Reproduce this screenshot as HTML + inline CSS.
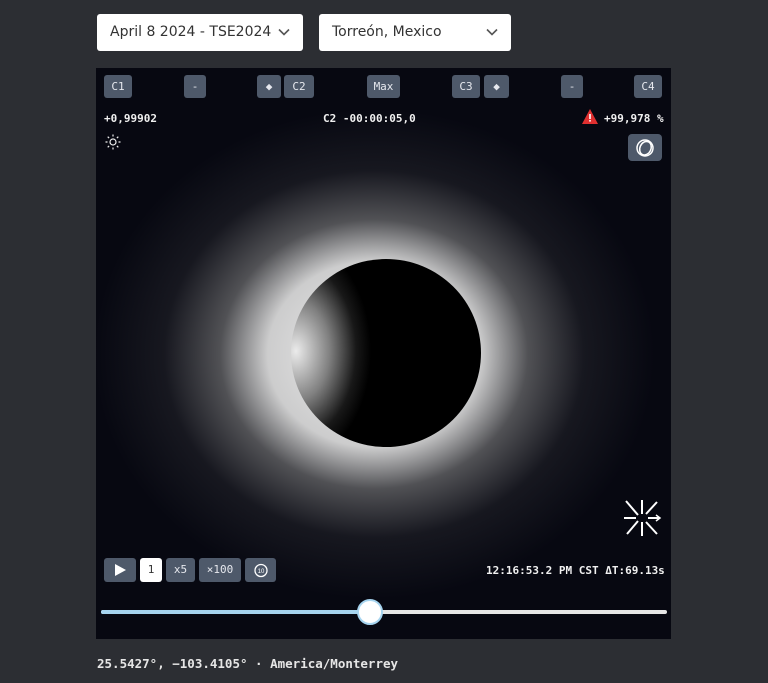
<!DOCTYPE html>
<html><head><meta charset="utf-8"><style>
*{margin:0;padding:0;box-sizing:border-box}
html,body{width:768px;height:683px;overflow:hidden}
body{background:#2c2e33;font-family:"Liberation Sans",sans-serif;position:relative}
.sel{position:absolute;top:14px;height:37px;background:#fff;border-radius:3px;font-family:"DejaVu Sans",sans-serif;font-size:14px;color:#333;line-height:37px;padding-left:13px}
.sel svg{position:absolute;right:13px;top:14px}
#panel{position:absolute;left:96px;top:68px;width:575px;height:571px;background:#070811;overflow:hidden}
.b{position:absolute;height:23px;background:#4e596a;border-radius:3px;color:#e6e8ee;font-family:"DejaVu Sans Mono","Liberation Mono",monospace;font-size:11px;line-height:23px;text-align:center}
.t{position:absolute;color:#f0f0f0;font-family:"DejaVu Sans Mono","Liberation Mono",monospace;font-size:11px;font-weight:bold}
</style></head><body>
<div class="sel" style="left:97px;width:206px">April 8 2024 - TSE2024<svg width="12" height="8" viewBox="0 0 12 8"><path d="M1 1.5L6 6.5L11 1.5" stroke="#555" stroke-width="1.6" fill="none"/></svg></div>
<div class="sel" style="left:319px;width:192px">Torreón, Mexico<svg width="12" height="8" viewBox="0 0 12 8"><path d="M1 1.5L6 6.5L11 1.5" stroke="#555" stroke-width="1.6" fill="none"/></svg></div>
<div id="panel">
<div style="position:absolute;left:-110px;top:-100px;width:800px;height:770px;background:radial-gradient(ellipse 280px 245px at 388px 386px,rgba(240,240,240,1) 0%,rgba(215,215,215,.95) 38%,rgba(130,130,130,.6) 55%,rgba(60,60,65,.3) 75%,rgba(7,8,17,0) 100%)"></div>
<div style="position:absolute;left:195px;top:191px;width:190px;height:188px;border-radius:50%;background:radial-gradient(ellipse 75px 110px at 5px 92px,rgba(235,235,235,1) 0%,rgba(160,160,160,.8) 45%,rgba(40,40,40,.6) 80%,#000 100%),#000;background-color:#000"></div>
<div class="b" style="left:8px;top:7px;width:28px">C1</div>
<div class="b" style="left:88px;top:7px;width:22px">-</div>
<div class="b" style="left:161px;top:7px;width:24px">◆</div>
<div class="b" style="left:188px;top:7px;width:30px">C2</div>
<div class="b" style="left:271px;top:7px;width:33px">Max</div>
<div class="b" style="left:356px;top:7px;width:28px">C3</div>
<div class="b" style="left:388px;top:7px;width:25px">◆</div>
<div class="b" style="left:465px;top:7px;width:22px">-</div>
<div class="b" style="left:538px;top:7px;width:28px">C4</div>
<div class="t" style="left:8px;top:44px">+0,99902</div>
<div class="t" style="left:227px;top:44px">C2 -00:00:05,0</div>
<svg style="position:absolute;left:486px;top:41px" width="16" height="15" viewBox="0 0 16 15"><path d="M8 0L16 15H0Z" fill="#e03030"/><rect x="7.2" y="5" width="1.6" height="5" fill="#fff"/><rect x="7.2" y="11" width="1.6" height="1.6" fill="#fff"/></svg>
<div class="t" style="left:508px;top:44px">+99,978 %</div>
<svg style="position:absolute;left:9px;top:66px" width="16" height="16" viewBox="0 0 16 16" stroke="#eee" stroke-width="1.2" fill="none"><circle cx="8" cy="8" r="3"/><path d="M8 0.5v2M8 13.5v2M0.5 8h2M13.5 8h2M2.7 2.7l1.4 1.4M11.9 11.9l1.4 1.4M2.7 13.3l1.4-1.4M11.9 4.1l1.4-1.4"/></svg>
<div class="b" style="left:532px;top:66px;width:34px;height:27px;border-radius:4px"><svg style="position:absolute;left:7px;top:4px" width="20" height="20" viewBox="0 0 20 20" fill="none" stroke="#fff" stroke-width="1.5"><circle cx="10" cy="10" r="8"/><ellipse cx="10.5" cy="10" rx="5.5" ry="7" transform="rotate(25 10 10)"/></svg></div>
<svg style="position:absolute;left:526px;top:430px" width="40" height="40" viewBox="0 0 40 40" stroke="#fff" stroke-width="2" fill="none"><path d="M4 3L16 17M5 36L16 23M20 2v14M20 24v14M24 16L35 4M24 24L35 36M2 20h12M26 20h12"/><path d="M34 17l4 3-4 3" stroke-width="1.5"/></svg>
<div class="b" style="left:8px;top:490px;width:32px;height:24px"><svg style="position:absolute;left:11px;top:6px" width="11" height="12" viewBox="0 0 11 12"><path d="M0 0L11 6L0 12Z" fill="#fff"/></svg></div>
<div class="b" style="left:44px;top:490px;width:22px;height:24px;background:#fff;color:#333">1</div>
<div class="b" style="left:70px;top:490px;width:29px;height:24px">x5</div>
<div class="b" style="left:103px;top:490px;width:42px;height:24px">×100</div>
<div class="b" style="left:149px;top:490px;width:31px;height:24px"><svg style="position:absolute;left:8px;top:4px" width="16" height="16" viewBox="0 0 16 16" fill="none" stroke="#fff" stroke-width="1.3"><circle cx="8" cy="8.5" r="6"/><text x="8" y="11" font-size="6" fill="#fff" stroke="none" text-anchor="middle" font-family="Liberation Sans">10</text></svg></div>
<div class="t" style="left:390px;top:496px">12:16:53.2 PM CST ΔT:69.13s</div>
<div style="position:absolute;left:5px;top:542px;width:566px;height:4px;border-radius:2px;background:#e6e6e6"></div>
<div style="position:absolute;left:5px;top:542px;width:270px;height:4px;border-radius:2px;background:#a6d4ef"></div>
<div style="position:absolute;left:261px;top:531px;width:26px;height:26px;border-radius:50%;background:#fff;border:2px solid #a6d4ef"></div>
</div>
<div style="position:absolute;left:97px;top:656px;color:#e6e6e6;font-family:'DejaVu Sans Mono','Liberation Mono',monospace;font-size:12.5px;font-weight:bold">25.5427°, −103.4105° · America/Monterrey</div>
</body></html>
